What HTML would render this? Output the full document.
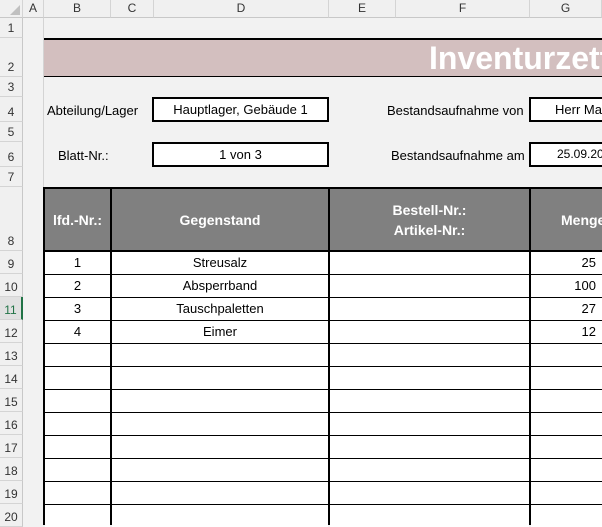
<!DOCTYPE html>
<html><head><meta charset="utf-8"><style>
*{margin:0;padding:0;box-sizing:border-box}
body{width:602px;height:525px;overflow:hidden;background:#f2f2f2;position:relative;font-family:"Liberation Sans",sans-serif;font-size:13px;color:#000}
.a{position:absolute}
.ch{top:0;height:18px;background:#f0f0f0;border-right:1px solid #d4d4d4;border-bottom:1px solid #c8c8c8;text-align:center;line-height:17px;color:#333;font-size:12px}
.rh{left:0;width:23px;background:#f0f0f0;border-bottom:1px solid #d4d4d4;border-right:1px solid #c8c8c8;text-align:center;color:#333;font-size:12px;display:flex;align-items:flex-end;justify-content:center;padding-bottom:2px}
.box{background:#fff;border:2px solid #000;text-align:center;line-height:21px}
.hd{background:#808080;color:#fff;font-weight:bold;font-size:14px;display:flex;align-items:center;justify-content:center;text-align:center;line-height:20px}
.c{background:#fff;text-align:center;line-height:22px}
</style></head><body>
<div class="a ch" style="left:0;width:23px"><svg width="10" height="10" style="position:absolute;left:10px;top:5px"><polygon points="10,0 10,10 0,10" fill="#c0c0c0"/></svg></div>
<div class="a ch" style="left:23px;width:21px">A</div>
<div class="a ch" style="left:44px;width:67px">B</div>
<div class="a ch" style="left:111px;width:43px">C</div>
<div class="a ch" style="left:154px;width:175px">D</div>
<div class="a ch" style="left:329px;width:67px">E</div>
<div class="a ch" style="left:396px;width:134px">F</div>
<div class="a ch" style="left:530px;width:72px">G</div>

<div class="a rh" style="top:18px;height:20px">1</div>
<div class="a rh" style="top:38px;height:39px">2</div>
<div class="a rh" style="top:77px;height:20px">3</div>
<div class="a rh" style="top:97px;height:25px">4</div>
<div class="a rh" style="top:122px;height:20px">5</div>
<div class="a rh" style="top:142px;height:25px">6</div>
<div class="a rh" style="top:167px;height:20px">7</div>
<div class="a rh" style="top:187px;height:64px">8</div>
<div class="a rh" style="top:251px;height:23px">9</div>
<div class="a rh" style="top:274px;height:23px">10</div>
<div class="a rh" style="top:297px;height:23px;color:#217346;border-right:2px solid #217346;background:#e1e1e1">11</div>
<div class="a rh" style="top:320px;height:23px">12</div>
<div class="a rh" style="top:343px;height:23px">13</div>
<div class="a rh" style="top:366px;height:23px">14</div>
<div class="a rh" style="top:389px;height:23px">15</div>
<div class="a rh" style="top:412px;height:23px">16</div>
<div class="a rh" style="top:435px;height:23px">17</div>
<div class="a rh" style="top:458px;height:23px">18</div>
<div class="a rh" style="top:481px;height:23px">19</div>
<div class="a rh" style="top:504px;height:23px">20</div>

<div class="a" style="left:23px;top:18px;width:21px;height:507px;border-right:1px solid #d4d4d4"></div>

<!-- title -->
<div class="a" style="left:44px;top:38px;width:558px;height:39px;background:#d3bfbf;border-top:2px solid #000;border-bottom:1px solid #000;overflow:hidden">
<div class="a" style="left:385px;top:-1px;color:#fff;font-weight:bold;font-size:32px;white-space:nowrap;line-height:38px">Inventurzettel</div></div>

<div class="a" style="left:47px;top:103px">Abteilung/Lager</div>
<div class="a box" style="left:152px;top:97px;width:177px;height:25px">Hauptlager, Gebäude 1</div>
<div class="a" style="left:58px;top:148px">Blatt-Nr.:</div>
<div class="a box" style="left:152px;top:142px;width:177px;height:25px">1 von 3</div>
<div class="a" style="left:387px;top:103px">Bestandsaufnahme von</div>
<div class="a box" style="left:529px;top:97px;width:80px;height:25px;text-align:left;padding-left:24px;white-space:nowrap;overflow:hidden">Herr Ma</div>
<div class="a" style="left:391px;top:148px">Bestandsaufnahme am</div>
<div class="a box" style="left:529px;top:142px;width:80px;height:25px;text-align:left;padding-left:26px;font-size:12px;white-space:nowrap;overflow:hidden">25.09.20</div>

<!-- table -->
<div class="a" style="left:43px;top:187px;width:559px;height:338px;background:#000"></div>
<div class="a hd" style="left:45px;top:189px;width:65px;height:61px">lfd.-Nr.:</div>
<div class="a hd" style="left:112px;top:189px;width:216px;height:61px">Gegenstand</div>
<div class="a hd" style="left:330px;top:189px;width:199px;height:61px">Bestell-Nr.:<br>Artikel-Nr.:</div>
<div class="a hd" style="left:531px;top:189px;width:80px;height:61px;justify-content:flex-start;padding-left:30px">Menge</div>

<div id="rows"></div>
<script>
var d=[["1","Streusalz","25"],["2","Absperrband","100"],["3","Tauschpaletten","27"],["4","Eimer","12"]];
var h="";
for(var i=0;i<12;i++){var t=252+i*23;var r=d[i]||["","",""];
h+='<div class="a c" style="left:45px;top:'+t+'px;width:65px;height:22px">'+r[0]+'</div>';
h+='<div class="a c" style="left:112px;top:'+t+'px;width:216px;height:22px">'+r[1]+'</div>';
h+='<div class="a c" style="left:330px;top:'+t+'px;width:199px;height:22px"></div>';
h+='<div class="a c" style="left:531px;top:'+t+'px;width:71px;height:22px;text-align:right;padding-right:6px">'+r[2]+'</div>';}
document.getElementById("rows").innerHTML=h;
</script>
</body></html>
